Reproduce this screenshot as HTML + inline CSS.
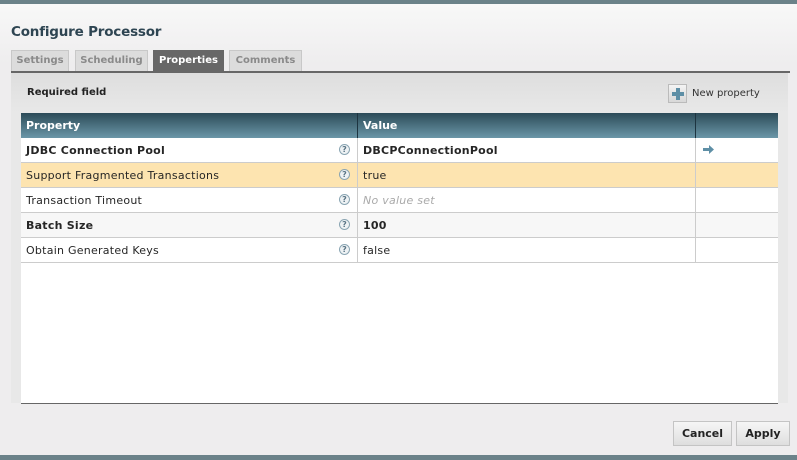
<!DOCTYPE html>
<html><head><style>
*{margin:0;padding:0;box-sizing:border-box}
body{width:797px;height:460px;overflow:hidden;background:#eeedee;font-family:"DejaVu Sans","Liberation Sans",sans-serif;position:relative}
.top{position:absolute;left:0;top:0;width:797px;height:4px;background:#6b8289}
.dlg{position:absolute;left:0;top:4px;width:797px;height:452px;background:linear-gradient(#f8f8f8,#eeedee 60px)}
.bot{position:absolute;left:0;top:455px;width:797px;height:5px;background:#6b8289}
.title{position:absolute;left:11px;top:24px;font-size:13.5px;font-weight:bold;color:#2e4552;letter-spacing:-0.2px}
.tab{position:absolute;top:50px;height:21px;background:#dcdcdc;border:1px solid #c8c8c8;border-bottom:none;font-size:10px;font-weight:bold;color:#8a8a8a;text-align:center;line-height:20px}
.tab.on{background:#676767;color:#fff;border-color:#676767}
.line{position:absolute;left:11px;top:71px;width:779px;height:2px;background:#676767}
.panel{position:absolute;left:11px;top:73px;width:777px;height:330px;background:linear-gradient(#dedede,#e8e8e8 40px)}
.req{position:absolute;left:27px;top:87px;font-size:10px;font-weight:bold;color:#222}
.np{position:absolute;left:668px;top:84px;width:19px;height:19px;background:linear-gradient(#f4f4f4,#d8d8d8);border:1px solid #bbb}
.np:before{content:"";position:absolute;left:7px;top:3px;width:4px;height:12px;background:#5e8fa6}
.np:after{content:"";position:absolute;left:3px;top:7px;width:12px;height:4px;background:#5e8fa6}
.npt{position:absolute;left:692px;top:88px;font-size:10px;color:#333}
.tbl{position:absolute;left:21px;top:113px;width:757px;height:291px;background:#fff;border-bottom:1px solid #666}
.hd{position:absolute;left:0;top:0;width:757px;height:25px;background:linear-gradient(#2c4b58,#6b97a8);color:#fff;font-size:11px;font-weight:bold}
.hd span{position:absolute;top:6px}
.vl{position:absolute;top:0;width:1px;height:25px;background:#1d3440}
.row{position:absolute;left:0;width:757px;height:25px;border-bottom:1px solid #ccc;font-size:11px;color:#262626;letter-spacing:0.25px}
.row span{position:absolute;top:6px}
.row .c1{left:5px}.row .c2{left:342px}
.row .b{font-weight:bold}
.rv{position:absolute;top:0;width:1px;height:24px;background:#ccc}
.q{position:absolute;left:318px;top:6px;width:11px;height:11px;border-radius:50%;border:1px solid #8aa5b3;background:#eef2f4;font-size:8px;line-height:9px;text-align:center;color:#5a7585;font-weight:bold;letter-spacing:0}
.btn{position:absolute;top:421px;height:25px;background:linear-gradient(#f6f6f6,#dedede);border:1px solid #c4c4c4;font-size:11px;font-weight:bold;color:#222;text-align:center;line-height:23px}
</style></head><body>
<div class="top"></div>
<div class="dlg"></div>
<div class="bot"></div>
<div class="title">Configure Processor</div>
<div class="tab" style="left:11px;width:58px">Settings</div>
<div class="tab" style="left:75px;width:73px">Scheduling</div>
<div class="tab on" style="left:153px;width:71px">Properties</div>
<div class="tab" style="left:229px;width:73px">Comments</div>
<div class="line"></div>
<div class="panel"></div>
<div class="req">Required field</div>
<div class="np"></div>
<div class="npt">New property</div>
<div class="tbl">
 <div class="hd"><span style="left:5px">Property</span><span style="left:342px">Value</span>
  <div class="vl" style="left:336px"></div><div class="vl" style="left:674px"></div></div>
 <div class="row" style="top:25px"><span class="c1 b">JDBC Connection Pool</span><div class="q">?</div><span class="c2 b">DBCPConnectionPool</span><div class="rv" style="left:336px"></div><div class="rv" style="left:674px"></div>
  <svg style="position:absolute;left:681px;top:6px" width="13" height="11"><path d="M1 4h6V1l5 4.5-5 4.5V7H1z" fill="#5e8fa6"/></svg></div>
 <div class="row" style="top:50px;background:#fde4b0"><span class="c1">Support Fragmented Transactions</span><div class="q">?</div><span class="c2">true</span><div class="rv" style="left:336px"></div><div class="rv" style="left:674px"></div></div>
 <div class="row" style="top:75px"><span class="c1">Transaction Timeout</span><div class="q">?</div><span class="c2" style="color:#aaa;font-style:italic">No value set</span><div class="rv" style="left:336px"></div><div class="rv" style="left:674px"></div></div>
 <div class="row" style="top:100px;background:#f7f7f7"><span class="c1 b">Batch Size</span><div class="q">?</div><span class="c2 b">100</span><div class="rv" style="left:336px"></div><div class="rv" style="left:674px"></div></div>
 <div class="row" style="top:125px"><span class="c1">Obtain Generated Keys</span><div class="q">?</div><span class="c2">false</span><div class="rv" style="left:336px"></div><div class="rv" style="left:674px"></div></div>
</div>
<div class="btn" style="left:673px;width:59px">Cancel</div>
<div class="btn" style="left:736px;width:54px">Apply</div>
</body></html>
